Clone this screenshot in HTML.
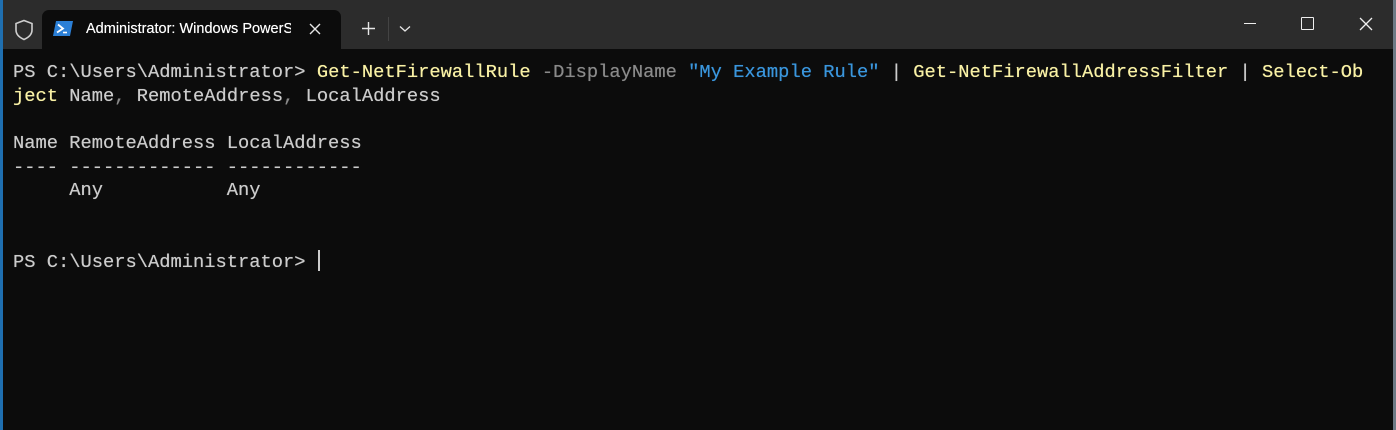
<!DOCTYPE html>
<html><head><meta charset="utf-8"><style>
*{margin:0;padding:0;box-sizing:border-box}
html,body{width:1396px;height:430px;overflow:hidden;background:#0c0c0c}
.edge{position:absolute;left:0;top:0;width:3px;height:430px;background:#1f6fb0}
.redge{position:absolute;right:0;top:0;width:3px;height:430px;background:#6d7a85}
.title{position:absolute;left:3px;top:0;width:1390px;height:49px;background:#2c2c2c}
.tab{position:absolute;left:42px;top:10px;width:299px;height:39px;background:#0c0c0c;border-radius:7px 7px 0 0}
.tabtext{position:absolute;left:86px;top:21px;font:14.5px "Liberation Sans",sans-serif;color:#fff;white-space:nowrap;width:205px;overflow:hidden;text-shadow:0 0 0.4px #fff}
.term{position:absolute;left:13px;top:61px;font:18.75px/23.65px "Liberation Mono",monospace;color:#cccccc;white-space:pre;text-shadow:0 0 0.5px currentColor}
.y{color:#f9f1a5}.g{color:#8a8a8a}.b{color:#3a96dd}
.cur{display:inline-block;width:2px;height:21px;background:#ccc;vertical-align:-4px;margin-left:1px}
</style></head><body>
<div class="title"></div>
<div class="edge"></div><div class="redge"></div>
<svg style="position:absolute;left:14px;top:19px" width="20" height="22" viewBox="0 0 20 22"><path d="M10 1.5 L18 4.5 V11 C18 15.5 14.5 18.5 10 20.5 C5.5 18.5 2 15.5 2 11 V4.5 Z" fill="none" stroke="#cfcfcf" stroke-width="1.6"/></svg>
<div class="tab"></div>
<svg style="position:absolute;left:53px;top:21px" width="20" height="15" viewBox="0 0 20 15"><path d="M3 0 H20 L17 15 H0 Z" fill="#2b7fd6"/><path d="M5 3.5 L10 7.5 L4 11.5" fill="none" stroke="#fff" stroke-width="1.8"/><path d="M10 11.5 H14" stroke="#fff" stroke-width="1.6"/></svg>
<div class="tabtext">Administrator: Windows PowerShell</div>
<svg style="position:absolute;left:308px;top:22px" width="14" height="14"><path d="M2 2 L12 12 M12 2 L2 12" stroke="#e6e6e6" stroke-width="1.4"/></svg>
<svg style="position:absolute;left:361px;top:21px" width="15" height="15"><path d="M7.5 1 V14 M1 7.5 H14" stroke="#e6e6e6" stroke-width="1.4"/></svg>
<div style="position:absolute;left:388px;top:17px;width:1px;height:24px;background:#444"></div>
<svg style="position:absolute;left:399px;top:25px" width="12" height="8"><path d="M1 1.5 L6 6 L11 1.5" fill="none" stroke="#e6e6e6" stroke-width="1.3"/></svg>
<div style="position:absolute;left:1244px;top:23px;width:12px;height:1.3px;background:#eee"></div>
<div style="position:absolute;left:1301px;top:17px;width:13px;height:13px;border:1.3px solid #eee;border-radius:1px"></div>
<svg style="position:absolute;left:1359px;top:17px" width="14" height="14"><path d="M1 1 L13 13 M13 1 L1 13" stroke="#eee" stroke-width="1.3"/></svg>
<div class="term">PS C:\Users\Administrator&gt; <span class="y">Get-NetFirewallRule</span> <span class="g">-DisplayName</span> <span class="b">"My Example Rule"</span> | <span class="y">Get-NetFirewallAddressFilter</span> | <span class="y">Select-Ob</span>
<span class="y">ject</span> Name<span class="g">,</span> RemoteAddress<span class="g">,</span> LocalAddress

Name RemoteAddress LocalAddress
---- ------------- ------------
     Any           Any


PS C:\Users\Administrator&gt; <span class="cur"></span></div>
</body></html>
